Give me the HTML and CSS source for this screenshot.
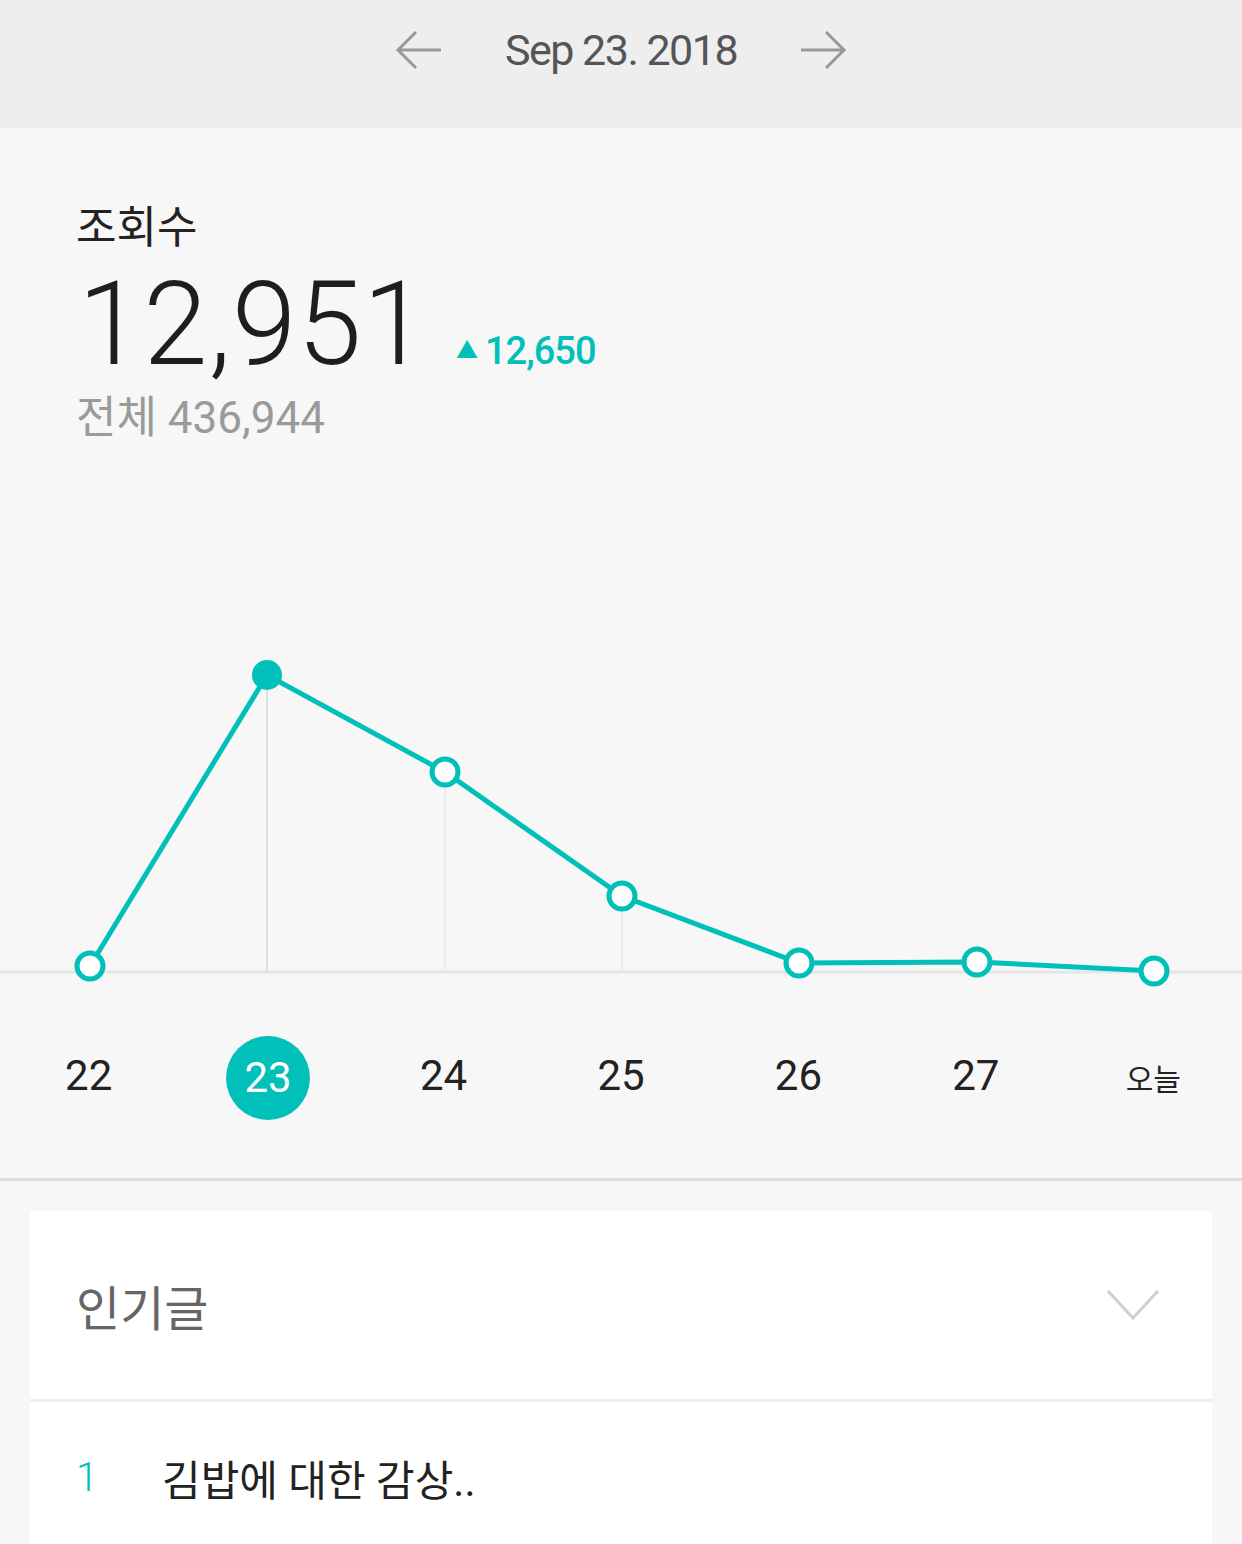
FILE: index.html
```html
<!DOCTYPE html>
<html lang="ko">
<head>
    <meta charset="UTF-8">
    <meta name="viewport" content="width=device-width, initial-scale=1.0">
    <title>통계 - 조회수</title>
    <link rel="stylesheet" href="styles.css">
</head>
<body>
    <div class="date-bar">
        <svg class="arrow" width="48" height="40" viewBox="0 0 48 40">
            <path d="M46 20H3M21 2L3 20l18 18" fill="none" stroke="#999" stroke-width="3"/>
        </svg>
        <span class="date">Sep 23. 2018</span>
        <svg class="arrow" width="48" height="40" viewBox="0 0 48 40">
            <path d="M2 20h43M27 2l18 18-18 18" fill="none" stroke="#999" stroke-width="3"/>
        </svg>
    </div>

    <div class="stats">
        <div class="stat-title">조회수</div>
        <div class="stat-row">
            <span class="stat-value">12,951</span>
            <span class="stat-diff"><span class="tri">▲</span>12,650</span>
        </div>
        <div class="stat-total">전체 436,944</div>

        <svg class="chart" width="1242" height="400" viewBox="0 0 1242 400">
            <line x1="0" y1="352" x2="1242" y2="352" stroke="#e6e6e6" stroke-width="3"/>
            <line x1="267" y1="55" x2="267" y2="352" stroke="#dedede" stroke-width="2"/>
            <line x1="445" y1="152" x2="445" y2="352" stroke="#ebebeb" stroke-width="2"/>
            <line x1="622" y1="276" x2="622" y2="352" stroke="#ebebeb" stroke-width="2"/>
            <polyline points="90,346 267,55 445,152 622,276 799,343 977,342 1154,351" fill="none" stroke="#00c0b9" stroke-width="5"/>
            <circle cx="267" cy="55" r="15" fill="#00c0b9"/>
            <g fill="#fff" stroke="#00c0b9" stroke-width="5">
                <circle cx="90" cy="346" r="13"/>
                <circle cx="445" cy="152" r="13"/>
                <circle cx="622" cy="276" r="13"/>
                <circle cx="799" cy="343" r="13"/>
                <circle cx="977" cy="342" r="13"/>
                <circle cx="1154" cy="351" r="13"/>
            </g>
        </svg>

        <div class="days">
            <div class="day">22</div>
            <div class="day"><span class="day-active">23</span></div>
            <div class="day">24</div>
            <div class="day">25</div>
            <div class="day">26</div>
            <div class="day">27</div>
            <div class="day today">오늘</div>
        </div>
    </div>

    <div class="popular">
        <div class="card">
            <div class="card-head">
                <span class="card-title">인기글</span>
                <svg width="54" height="32" viewBox="0 0 54 32">
                    <path d="M2 2l25 27L52 2" fill="none" stroke="#d0d0d0" stroke-width="3"/>
                </svg>
            </div>
            <div class="post">
                <span class="rank">1</span>
                <span class="post-title">김밥에 대한 감상..</span>
            </div>
        </div>
    </div>
</body>
</html>
```

FILE: styles.css
```css
body {
    margin: 0;
    background: #f7f7f7;
    font-family: Roboto, "Noto Sans CJK KR", sans-serif;
    color: #222;
    overflow: hidden;
}
.date-bar {
    height: 128px;
    background: #eeeeee;
    display: flex;
    align-items: center;
    justify-content: center;
    gap: 62px;
    padding-bottom: 28px;
    box-sizing: border-box;
}
.date {
    font-size: 43px;
    color: #555;
    letter-spacing: -1.5px;
    font-weight: 400;
}
.stats {
    border-bottom: 3px solid #dedede;
}
.stat-title {
    padding: 70px 0 0 76px;
    font-size: 44px;
    line-height: 60px;
    color: #222;
}
.stat-row {
    display: flex;
    align-items: baseline;
    padding-left: 78px;
    margin-top: 16px;
    height: 104px;
}
.stat-value {
    font-size: 116px;
    line-height: 100px;
    font-weight: 300;
    color: #1e1e1e;
    letter-spacing: 1px;
}
.stat-diff {
    margin-left: 28px;
    font-size: 38px;
    font-weight: 500;
    color: #00c0b9;
    letter-spacing: -1px;
}
.tri {
    font-size: 22px;
    margin-right: 8px;
    position: relative;
    top: -6px;
}
.stat-total {
    padding: 8px 0 0 76px;
    font-size: 44px;
    line-height: 64px;
    color: #9a9a9a;
}
.chart {
    display: block;
    margin-top: 170px;
}
.days {
    display: grid;
    grid-template-columns: repeat(7, 1fr);
    height: 158px;
    padding-top: 16px;
    box-sizing: border-box;
}
.day {
    display: flex;
    justify-content: center;
    align-items: flex-start;
    font-size: 42px;
    line-height: 80px;
    color: #222;
}
.day-active {
    width: 84px;
    height: 84px;
    line-height: 84px;
    border-radius: 50%;
    background: #00c0b9;
    color: #fff;
    text-align: center;
    margin-left: 4px;
}
.today {
    font-size: 30px;
    padding-top: 4px;
}
.popular {
    padding: 30px 30px 0;
}
.card {
    background: #fff;
}
.card-head {
    height: 188px;
    display: flex;
    align-items: center;
    justify-content: space-between;
    padding: 0 52px 0 46px;
    border-bottom: 3px solid #eeeeee;
}
.card-title {
    font-size: 48px;
    color: #666;
}
.post {
    display: flex;
    align-items: center;
    height: 150px;
    padding-left: 46px;
}
.rank {
    width: 86px;
    font-size: 40px;
    color: #00c0b9;
    font-weight: 300;
}
.post-title {
    font-size: 42px;
    color: #222;
}
```
